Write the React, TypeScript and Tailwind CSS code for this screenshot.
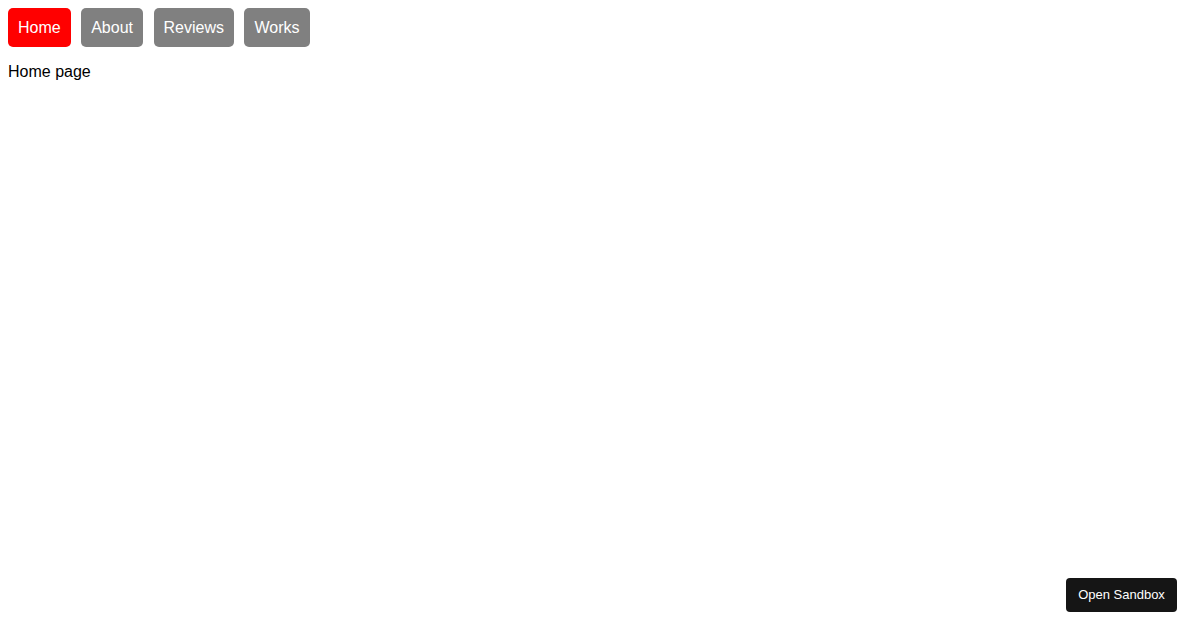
import React from "react";

export default function App() {
  const items = ["Home", "About", "Reviews", "Works"];
  return (
    <div className="min-h-[630px] bg-white p-[8px] text-black" style={{ fontFamily: '"Liberation Sans", Arial, sans-serif' }}>
      <nav className="flex gap-[10.5px]">
        {items.map((it, i) => (
          <button
            key={it}
            className={`h-[39px] rounded-[5px] px-[10px] text-[16px] leading-[19px] text-white ${i === 0 ? "bg-[#ff0000]" : "bg-[#808080]"}`}
          >
            {it}
          </button>
        ))}
      </nav>
      <p className="mt-[16px] text-[16px] leading-[18px]">Home page</p>
      <button className="fixed bottom-[18px] right-[23px] flex h-[34px] w-[111px] items-center justify-center rounded-[4px] bg-[#151515] text-[13px] text-white">
        Open Sandbox
      </button>
    </div>
  );
}
